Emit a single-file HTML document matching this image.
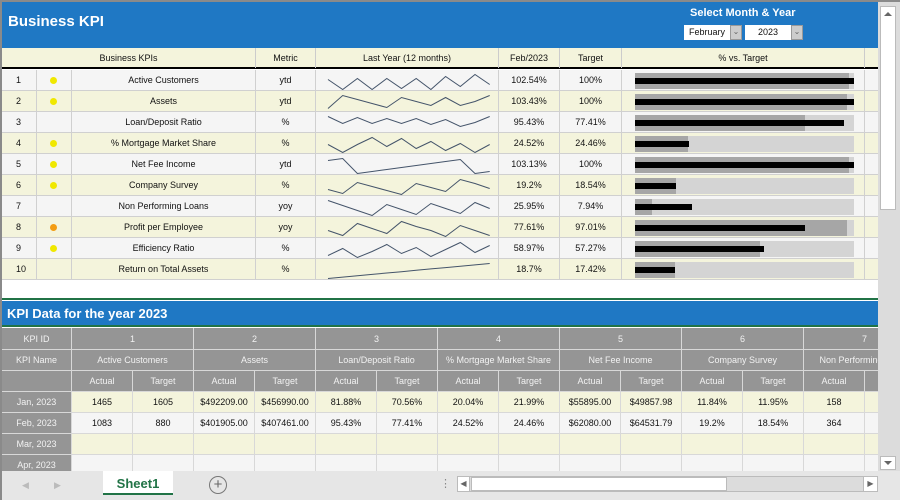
<!DOCTYPE html>
<html><head><meta charset="utf-8"><style>
*{margin:0;padding:0;box-sizing:border-box}
body{width:900px;height:500px;overflow:hidden;background:#fff;font-family:"Liberation Sans",sans-serif;font-size:9px;color:#111;position:relative}
.a{position:absolute}
.c{position:absolute;display:flex;align-items:center;justify-content:center;white-space:nowrap;overflow:hidden}
</style></head><body>
<div class="a" style="left:0;top:0;width:900px;height:500px;border-top:2px solid #8a8a8a;border-left:2px solid #8a8a8a"></div>
<div class="a" style="left:2px;top:2px;width:876px;height:46px;background:#1f78c4"></div>
<div class="a" style="left:8px;top:13px;color:#fff;font-weight:bold;font-size:15px">Business KPI</div>
<div class="a" style="left:690px;top:7px;color:#fff;font-weight:bold;font-size:11px">Select Month &amp; Year</div>
<div class="a" style="left:684px;top:25px;width:46px;height:15px;background:#fff;font-size:9px;padding:2px 0 0 5px">February</div>
<div class="a" style="left:730px;top:25px;width:12px;height:15px;background:#ccc;border:1px solid #999;color:#666;font-size:8px;text-align:center;line-height:12px">&#8964;</div>
<div class="a" style="left:745px;top:25px;width:46px;height:15px;background:#fff;font-size:9px;text-align:center;padding-top:2px">2023</div>
<div class="a" style="left:791px;top:25px;width:12px;height:15px;background:#ccc;border:1px solid #999;color:#666;font-size:8px;text-align:center;line-height:12px">&#8964;</div>
<div id="t1"></div>
<div class="a" style="left:2px;top:298px;width:876px;height:2px;background:#217346"></div>
<div class="a" style="left:2px;top:301px;width:876px;height:26px;background:#1f78c4;border-bottom:2px solid #217346"></div>
<div class="a" style="left:7px;top:306px;color:#fff;font-weight:bold;font-size:13px">KPI Data for the year 2023</div>
<div id="t2"></div>
<script>
var h='';
function cell(x,y,w,hh,txt,bg,st){h+='<div class="c" style="left:'+x+'px;top:'+y+'px;width:'+w+'px;height:'+hh+'px;background:'+bg+';'+(st||'')+'">'+txt+'</div>';}
cell(2,48,876,21,'','#f4f4dc','border-bottom:2px solid #000');
cell(2,48,254,20,'Business KPIs','transparent','border-right:1px solid #ccc');
cell(256,48,60,20,'Metric','transparent','border-right:1px solid #ccc');
cell(316,48,183,20,'Last Year (12 months)','transparent','border-right:1px solid #ccc');
cell(499,48,61,20,'Feb/2023','transparent','border-right:1px solid #ccc');
cell(560,48,62,20,'Target','transparent','border-right:1px solid #ccc');
cell(622,48,243,20,'% vs. Target','transparent','border-right:1px solid #ccc');
var rows=[
['Active Customers','ytd','102.54%','100%','#f0e800',[9,19,8,19,8,18,8,19,6,16,4,14],849,854],
['Assets','ytd','103.43%','100%','#f0e800',[17,4,8,12,16,6,10,14,6,14,10,4],847,854],
['Loan/Deposit Ratio','%','95.43%','77.41%','',[4,11,5,11,6,11,6,12,7,14,10,4],805,844],
['% Mortgage Market Share','%','24.52%','24.46%','#f0e800',[11,19,11,4,13,5,15,8,17,10,19,11],688,689],
['Net Fee Income','ytd','103.13%','100%','#f0e800',[6,4,19,17,15,13,11,9,7,5,19,17],849,854],
['Company Survey','%','19.2%','18.54%','#f0e800',[14,18,7,11,15,19,8,12,16,4,8,13],676,676],
['Non Performing Loans','yoy','25.95%','7.94%','',[4,9,14,19,8,13,18,7,12,17,6,12],652,692],
['Profit per Employee','yoy','77.61%','97.01%','#f39c12',[13,18,6,11,16,4,9,13,19,8,13,18],847,805],
['Efficiency Ratio','%','58.97%','57.27%','#f0e800',[17,10,19,13,6,15,9,18,11,4,14,7],760,764],
['Return on Total Assets','%','18.7%','17.42%','',[19,17.6,16.3,14.9,13.5,12.2,10.8,9.4,8.1,6.7,5.4,4],675,675]];
for(var i=0;i<10;i++){var r=rows[i],y=70+i*21,bg=i%2?'#f4f4dc':'#f5f5f5';
var b='border-right:1px solid #d0d0d0;border-bottom:1px solid #d0d0d0;';
cell(2,y,35,21,String(i+1),bg,b+'justify-content:flex-start;padding-left:14px');
cell(37,y,35,21,r[4]?'<span style="width:7px;height:7px;border-radius:50%;background:'+r[4]+';display:block;margin-left:-2px"></span>':'',bg,b);
cell(72,y,184,21,r[0],bg,b);
cell(256,y,60,21,r[1],bg,b);
var p='';for(var k=0;k<12;k++)p+=(12+k*14.7).toFixed(1)+','+(r[5][k]+0.5)+' ';
cell(316,y,183,21,'<svg width="183" height="21" style="position:absolute;left:0;top:0"><polyline points="'+p+'" fill="none" stroke="#44546a" stroke-width="1"/></svg>',bg,b);
cell(499,y,61,21,r[2],bg,b);
cell(560,y,62,21,r[3],bg,b);
cell(622,y,243,21,'',bg,b);
cell(865,y,13,21,'',bg,'border-bottom:1px solid #d0d0d0');
h+='<div class="a" style="left:635px;top:'+(y+3)+'px;width:219px;height:16px;background:#d4d4d4"></div>';
h+='<div class="a" style="left:635px;top:'+(y+3)+'px;width:'+(r[6]-635)+'px;height:16px;background:#a6a6a6"></div>';
h+='<div class="a" style="left:635px;top:'+(y+8)+'px;width:'+(r[7]-635)+'px;height:6px;background:#000"></div>';
}
document.getElementById('t1').outerHTML=h;
h='';var G='#959595',gb='border-right:1px solid #d8d8d8;border-bottom:1px solid #d8d8d8;color:#f2f2f2;';
var names=['Active Customers','Assets','Loan/Deposit Ratio','% Mortgage Market Share','Net Fee Income','Company Survey','Non Performing Loans'];
cell(2,328,70,22,'KPI ID',G,gb);cell(2,350,70,21,'KPI Name',G,gb);cell(2,371,70,21,'',G,gb);
for(var g=0;g<7;g++){var x=72+g*122;
cell(x,328,122,22,String(g+1),G,gb);cell(x,350,122,21,names[g],G,gb);
cell(x,371,61,21,'Actual',G,gb);cell(x+61,371,61,21,'Target',G,gb);}
var months=['Jan, 2023','Feb, 2023','Mar, 2023','Apr, 2023'];
var data=[['1465','1605','$492209.00','$456990.00','81.88%','70.56%','20.04%','21.99%','$55895.00','$49857.98','11.84%','11.95%','158',''],
['1083','880','$401905.00','$407461.00','95.43%','77.41%','24.52%','24.46%','$62080.00','$64531.79','19.2%','18.54%','364','']];
for(var m=0;m<4;m++){var y=392+m*21,bg=m%2?'#f5f5f5':'#f4f4dc';
cell(2,y,70,21,months[m],G,gb);
for(var c=0;c<14;c++){cell(72+c*61,y,61,21,data[m]?data[m][c]:'',bg,'border-right:1px solid #d8d8d8;border-bottom:1px solid #d8d8d8;');}}
document.getElementById('t2').outerHTML=h;
</script>
<div class="a" style="left:878px;top:2px;width:22px;height:470px;background:#dcdcdc"></div>
<div class="a" style="left:880px;top:6px;width:16px;height:204px;background:#fff;border:1px solid #bbb"></div>
<div class="a" style="left:884px;top:12px;width:0;height:0;border-left:4px solid transparent;border-right:4px solid transparent;border-bottom:4px solid #666"></div>
<div class="a" style="left:880px;top:456px;width:16px;height:14px;background:#fff;border:1px solid #bbb"></div>
<div class="a" style="left:884px;top:461px;width:0;height:0;border-left:4px solid transparent;border-right:4px solid transparent;border-top:4px solid #666"></div>
<div class="a" style="left:2px;top:471px;width:898px;height:29px;background:#e6e6e6"></div>
<div class="a" style="left:22px;top:480px;color:#bbb;font-size:9px">&#9664;</div>
<div class="a" style="left:54px;top:480px;color:#bbb;font-size:9px">&#9654;</div>
<div class="a" style="left:103px;top:471px;width:70px;height:24px;background:#fff;border-bottom:2px solid #217346;color:#217346;font-weight:bold;font-size:13px;text-align:center;line-height:26px">Sheet1</div>
<div class="a" style="left:209px;top:476px;width:18px;height:18px;border:1.5px solid #777;border-radius:50%;color:#666;font-size:15px;text-align:center;line-height:15px">+</div>
<div class="a" style="left:440px;top:477px;color:#888;font-size:11px">&#8942;</div>
<div class="a" style="left:457px;top:476px;width:421px;height:16px;background:#dcdcdc;border:1px solid #bbb"></div>
<div class="a" style="left:458px;top:477px;width:12px;height:14px;background:#fff;border-right:1px solid #bbb;color:#666;font-size:8px;line-height:14px;text-align:center">&#9664;</div>
<div class="a" style="left:471px;top:477px;width:256px;height:14px;background:#fff;border:1px solid #bbb"></div>
<div class="a" style="left:863px;top:477px;width:14px;height:14px;background:#fff;border-left:1px solid #bbb;color:#666;font-size:8px;line-height:14px;text-align:center">&#9654;</div>
</body></html>
